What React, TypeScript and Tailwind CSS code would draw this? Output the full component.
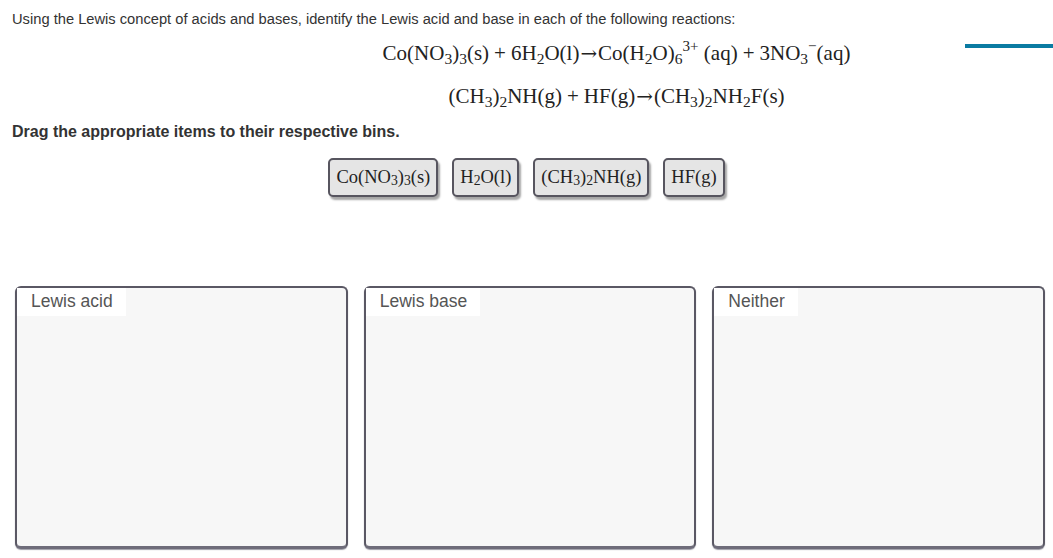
import React from 'react';

const serif = { fontFamily: '"Liberation Serif", "DejaVu Serif", serif' };

function Sub({ children }: { children: React.ReactNode }) {
  return <sub className="text-[0.74em] relative top-[0.22em] align-baseline leading-none">{children}</sub>;
}

function Sup({ children }: { children: React.ReactNode }) {
  return <sup className="text-[0.72em] relative -top-[0.6em] align-baseline leading-none">{children}</sup>;
}

// operators get the wider math spacing
function Op({ children }: { children: React.ReactNode }) {
  return <span className="mx-[5px]">{children}</span>;
}

function Arrow() {
  return (
    <span className="inline-block text-[0.95em] mx-[1px]" style={{ fontFamily: '"DejaVu Serif", serif' }}>
      →
    </span>
  );
}

function Chip({ children }: { children: React.ReactNode }) {
  return (
    <div
      className="h-[39px] px-[6px] flex items-center rounded-[5px] border-2 border-[#57555f] bg-[#e5e5e5] text-[18.5px] text-[#222] shadow-[2px_3px_2px_rgba(0,0,0,0.35)]"
      style={serif}
    >
      {children}
    </div>
  );
}

function Bin({ label }: { label: string }) {
  return (
    <div className="flex-1 h-[263px] rounded-[6px] border-2 border-[#5a5864] border-b-[3px] border-b-[#6e6c7a] bg-[#f7f7f7] shadow-[0_1px_1px_rgba(60,60,80,0.5)]">
      <div className="inline-block bg-white pl-[14px] pr-[13px] h-[28px] leading-[27px] text-[17.5px] text-[#555]">{label}</div>
    </div>
  );
}

export default function App() {
  return (
    <div className="w-[1053px] h-[558px] bg-white relative overflow-hidden" style={{ fontFamily: '"Liberation Sans", Arial, sans-serif' }}>
      <div className="absolute right-0 top-[44px] w-[88px] h-[4px] bg-[#0a7ba2]" />

      <p className="pt-[8px] pl-[12px] text-[14.7px] text-[#333]">
        Using the Lewis concept of acids and bases, identify the Lewis acid and base in each of the following reactions:
      </p>

      <div className="flex flex-col items-center text-[21px] text-[#222] pl-[180px]" style={serif}>
        <div className="h-[40px] mt-[4px] flex items-center">
          <span>
            Co(NO<Sub>3</Sub>)<Sub>3</Sub>(s)<Op>+</Op>6H<Sub>2</Sub>O(l)<Arrow />Co(H<Sub>2</Sub>O)<Sub>6</Sub>
            <Sup>3+</Sup> (aq)<Op>+</Op>3NO<Sub>3</Sub>
            <Sup>−</Sup>(aq)
          </span>
        </div>
        <div className="h-[40px] mt-[3px] flex items-center">
          <span>
            (CH<Sub>3</Sub>)<Sub>2</Sub>NH(g)<Op>+</Op>HF(g)<Arrow />(CH<Sub>3</Sub>)<Sub>2</Sub>NH<Sub>2</Sub>F(s)
          </span>
        </div>
      </div>

      <p className="mt-[3px] pl-[12px] text-[16px] font-bold text-[#333]">Drag the appropriate items to their respective bins.</p>

      <div className="mt-[14px] flex justify-center gap-[14px]">
        <Chip>
          Co(NO<Sub>3</Sub>)<Sub>3</Sub>(s)
        </Chip>
        <Chip>
          H<Sub>2</Sub>O(l)
        </Chip>
        <Chip>
          (CH<Sub>3</Sub>)<Sub>2</Sub>NH(g)
        </Chip>
        <Chip>HF(g)</Chip>
      </div>

      <div className="mt-[89px] flex gap-[16px] pl-[15px] pr-[8px]">
        <Bin label="Lewis acid" />
        <Bin label="Lewis base" />
        <Bin label="Neither" />
      </div>
    </div>
  );
}
